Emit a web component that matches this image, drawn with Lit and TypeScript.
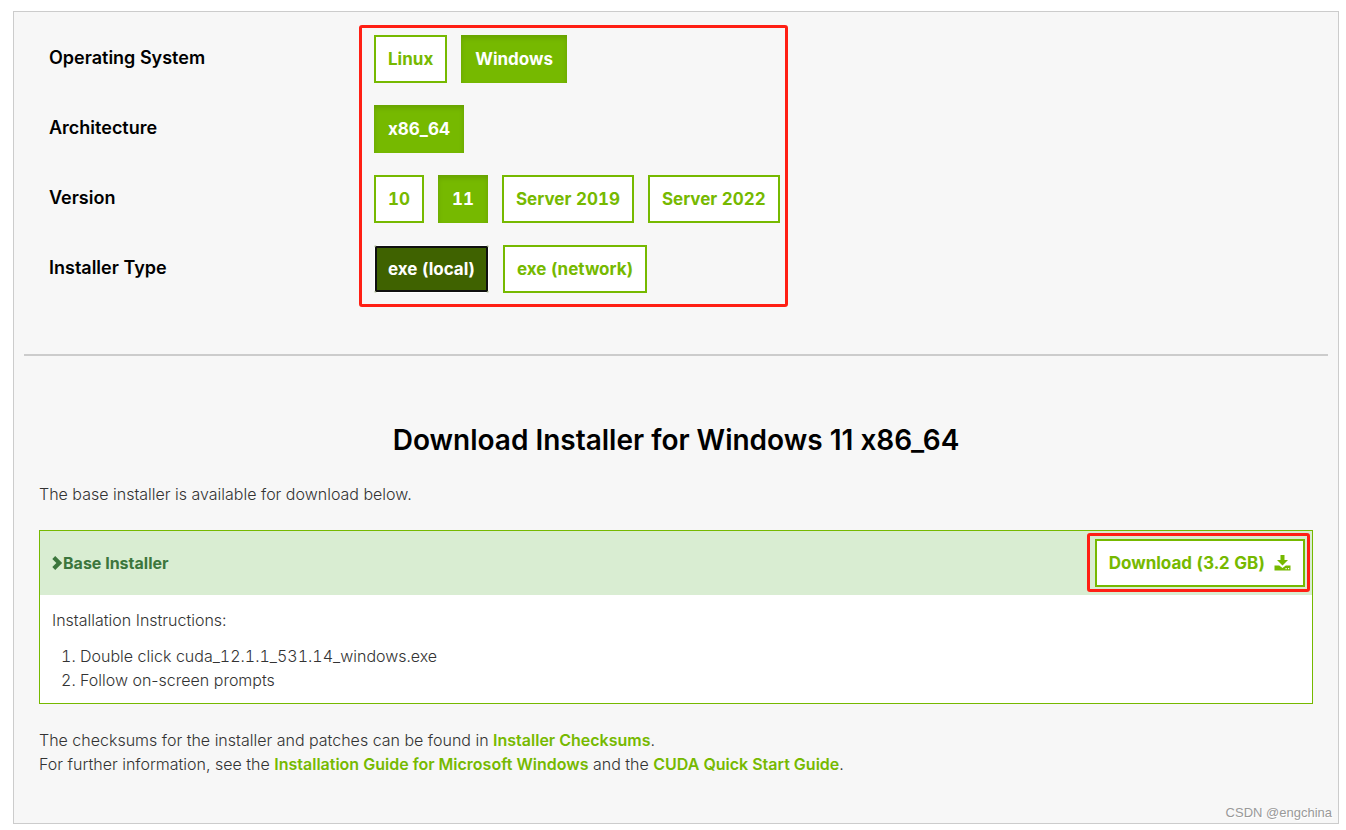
import { LitElement, html, css } from "lit";
import { customElement, state } from "lit/decorators.js";
import { classMap } from "lit/directives/class-map.js";

interface ChoiceRow {
  id: string;
  label: string;
  options: string[];
}

const ROWS: ChoiceRow[] = [
  { id: "os", label: "Operating System", options: ["Linux", "Windows"] },
  { id: "arch", label: "Architecture", options: ["x86_64"] },
  { id: "version", label: "Version", options: ["10", "11", "Server 2019", "Server 2022"] },
  { id: "type", label: "Installer Type", options: ["exe (local)", "exe (network)"] },
];

@customElement("app-root")
export class AppRoot extends LitElement {
  static styles = css`
    :host {
      display: block;
      position: relative;
      padding: 11px 7px 6px 13px;
      background: #fff;
      color: #333;
      font: 300 16px/24px Inter, "Noto Sans", sans-serif;
      font-variant-ligatures: no-contextual;
    }
    * {
      box-sizing: border-box;
    }
    .panel {
      display: flex;
      flex-direction: column;
      padding: 0 10px 47px;
      border: 1px solid #ccc;
      background: #f7f7f7;
    }
    .selector {
      position: relative;
      display: grid;
      grid-template-columns: 25% max-content;
      grid-template-rows: repeat(4, 48px);
      gap: 22px 24px;
      padding: 23px 0 61px;
      border-bottom: 2px solid #ccc;
    }
    .row {
      display: contents;
    }
    .row-label {
      grid-column: 1;
      padding: 11px 0 0 25px;
      color: #000;
      font-size: 18px;
      font-weight: 600;
    }
    .options {
      grid-column: 2;
      display: flex;
      gap: 14px;
    }
    .mark {
      position: absolute;
      grid-column: 2 / 3;
      grid-row: 1 / 5;
      inset: -10px -8px -14px -15px;
      border: 3px solid #ff1f14;
      border-radius: 3px;
      pointer-events: none;
    }
    .btn {
      display: flex;
      align-items: center;
      height: 48px;
      margin: 0;
      padding: 0 12px;
      border: 2px solid #76b900;
      border-radius: 0;
      background: #fff;
      color: #76b900;
      font-family: inherit;
      font-size: 17px;
      line-height: 24px;
      font-weight: 700;
      font-variant-ligatures: no-contextual;
      font-variant-numeric: tabular-nums;
      text-decoration: none;
      white-space: nowrap;
      cursor: pointer;
    }
    .btn.on {
      padding: 0 14px;
      border-width: 0;
      background: #76b900;
      box-shadow: inset 0 3px 5px rgba(0, 0, 0, 0.125);
      color: #fff;
    }
    .btn.focused {
      background: #3f6200;
      outline: 2px solid #101010;
      outline-offset: -3px;
      border-radius: 3px;
      box-shadow: inset 0 0 0 1px #fff;
    }
    .result {
      display: flex;
      flex-direction: column;
      padding: 66px 15px 0;
    }
    h1 {
      margin: 0 0 24px;
      color: #000;
      font-size: 28px;
      line-height: 36px;
      font-weight: 600;
      text-align: center;
    }
    p {
      margin: 0;
    }
    .installer {
      margin: 24px 0;
      border: 1px solid #76b900;
      background: #fff;
    }
    .head {
      display: flex;
      align-items: center;
      justify-content: space-between;
      padding: 2px 2px 3px 12px;
      background: #d9edd2;
    }
    .title {
      display: flex;
      align-items: center;
      margin: 0;
      color: #3c763d;
      font-size: 16px;
      font-weight: 700;
    }
    .chevron {
      width: 11px;
      height: 14px;
      fill: currentColor;
    }
    .frame {
      padding: 3px 2px 2px 5px;
      border: 3px solid #ff1f14;
      border-radius: 3px;
    }
    .dl-icon {
      width: 17px;
      height: 17px;
      margin-left: 9px;
      fill: currentColor;
    }
    .body {
      padding: 13px 12px 11px;
    }
    ol {
      margin: 12px 0 0;
      padding: 0 0 0 28px;
    }
    .file {
      font-variant-numeric: tabular-nums;
    }
    .link {
      color: #76b900;
      font-weight: 600;
      text-decoration: none;
    }
    .watermark {
      position: absolute;
      right: 14px;
      bottom: 8px;
      color: #999;
      font: 400 13px/18px "Liberation Sans", Arial, sans-serif;
      text-shadow: 1px 1px 0 #fff;
    }
  `;

  @state() private picked: Record<string, string> = {
    os: "Windows",
    arch: "x86_64",
    version: "11",
    type: "exe (local)",
  };

  @state() private focusedRow = "type";

  private pick(row: string, option: string) {
    this.picked = { ...this.picked, [row]: option };
    this.focusedRow = row;
  }

  private renderRow(row: ChoiceRow) {
    return html`
      <div class="row" role="group" aria-labelledby=${row.id}>
        <div class="row-label" id=${row.id}>${row.label}</div>
        <div class="options">
          ${row.options.map((option) => {
            const on = this.picked[row.id] === option;
            return html`<button
              type="button"
              class=${classMap({ btn: true, on, focused: on && this.focusedRow === row.id })}
              aria-pressed=${on ? "true" : "false"}
              @click=${() => this.pick(row.id, option)}
            >${option}</button>`;
          })}
        </div>
      </div>
    `;
  }

  render() {
    return html`
      <main class="panel">
        <section class="selector">
          ${ROWS.map((row) => this.renderRow(row))}
          <div class="mark"></div>
        </section>
        <section class="result">
          <h1>Download Installer for Windows 11 x86_64</h1>
          <p>The base installer is available for download below.</p>
          <div class="installer">
            <div class="head">
              <h2 class="title">
                <svg class="chevron" viewBox="0 0 11 14" aria-hidden="true">
                  <path d="M3.200 0 10.200 7 3.200 14 .3 11.100 4.400 7 .3 2.900Z" />
                </svg>
                Base Installer
              </h2>
              <div class="frame">
                <a class="btn" href="#download">
                  Download (3.2 GB)
                  <svg class="dl-icon" viewBox="0 0 17 17" aria-hidden="true">
                    <path d="M6.5 0h4v5H14L8.500 10.500 3 5h3.500Z" />
                    <path fill-rule="evenodd" d="M.5 10.500h4.700L8.500 13l3.300-2.500h4.700V15.500H.5ZM11.500 13v1.200h1.200v-1.200ZM14 13v1.200h1.200v-1.200Z" />
                  </svg>
                </a>
              </div>
            </div>
            <div class="body">
              <p>Installation Instructions:</p>
              <ol>
                <li>Double click <span class="file">cuda_12.1.1_531.14_windows.exe</span></li>
                <li>Follow on-screen prompts</li>
              </ol>
            </div>
          </div>
          <p>
            The checksums for the installer and patches can be found in
            <a class="link" href="#checksums">Installer Checksums</a>.<br />
            For further information, see the
            <a class="link" href="#guide">Installation Guide for Microsoft Windows</a> and the
            <a class="link" href="#quickstart">CUDA Quick Start Guide</a>.
          </p>
        </section>
      </main>
      <span class="watermark">CSDN @engchina</span>
    `;
  }
}
